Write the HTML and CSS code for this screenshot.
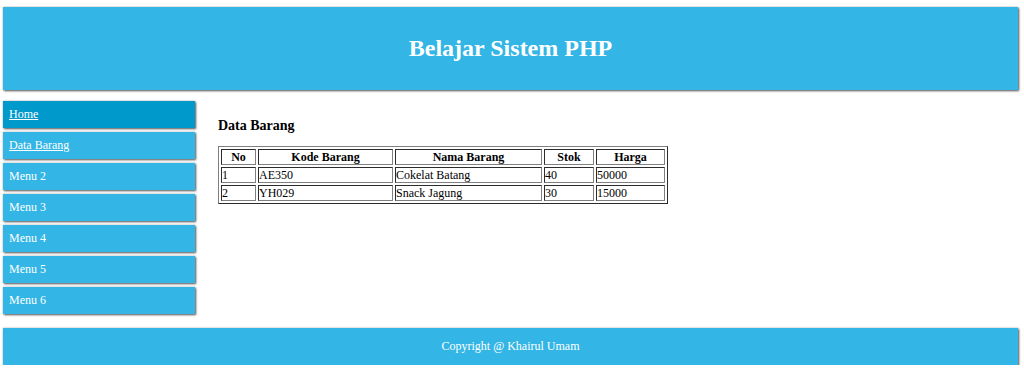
FILE: index.html
```html
<!doctype html>
<html>
<head>
    <meta charset="utf-8">
    <title>Belajar Sistem PHP</title>
    <link rel="stylesheet" href="styles.css">
</head>
<body>
<div id="wrapper">
    <div id="header">
        <h1>Belajar Sistem PHP</h1>
    </div>
    <div id="main">
        <div id="sidebar">
            <a class="menu active" href="#">Home</a>
            <a class="menu" href="#">Data Barang</a>
            <div class="menu">Menu 2</div>
            <div class="menu">Menu 3</div>
            <div class="menu">Menu 4</div>
            <div class="menu">Menu 5</div>
            <div class="menu">Menu 6</div>
        </div>
        <div id="content">
            <h3>Data Barang</h3>
            <table class="data" border="1">
                <tr>
                    <th class="colNo">No</th>
                    <th class="colKode">Kode Barang</th>
                    <th class="colNama">Nama Barang</th>
                    <th class="colStok">Stok</th>
                    <th class="colHarga">Harga</th>
                </tr>
                <tr>
                    <td>1</td>
                    <td>AE350</td>
                    <td>Cokelat Batang</td>
                    <td>40</td>
                    <td>50000</td>
                </tr>
                <tr>
                    <td>2</td>
                    <td>YH029</td>
                    <td>Snack Jagung</td>
                    <td>30</td>
                    <td>15000</td>
                </tr>
            </table>
        </div>
    </div>
    <div id="footer">
        Copyright @ Khairul Umam
    </div>
</div>
</body>
</html>
```

FILE: styles.css
```css
html {
    background-color: #fff;
}

body {
    margin: 0;
    font-family: "Liberation Serif", "Times New Roman", serif;
    font-size: 12px;
    color: #000;
}

#wrapper {
    margin: 7px 6px 0 3px;
}

#header {
    height: 83px;
    background-color: #33b5e5;
    box-shadow: 1px 1px 2px #555, 0 0 2px #ccc;
    display: flex;
    align-items: center;
    justify-content: center;
}

#header h1 {
    margin: 0;
    color: #fff;
    font-size: 24px;
}

#main {
    display: flex;
    margin-top: 11px;
}

#sidebar {
    width: 192px;
    display: flex;
    flex-direction: column;
    gap: 4px;
}

.menu {
    display: block;
    height: 27px;
    line-height: 27px;
    padding-left: 6px;
    color: #fff;
    background-color: #33b5e5;
    box-shadow: 1px 1px 2px #555, 0 0 2px #ccc;
}

a.menu {
    text-decoration: underline;
}

.menu.active {
    background-color: #0099cc;
}

#content {
    margin-left: 23px;
}

#content h3 {
    font-size: 14px;
    margin: 17px 0 12px;
}

table.data {
    border-collapse: separate;
    border-spacing: 2px;
}

table.data th, table.data td {
    padding: 0;
    height: 14px;
    line-height: 14px;
}

.colNo { width: 33px; }
.colKode { width: 133px; }
.colNama { width: 145px; }
.colStok { width: 48px; }
.colHarga { width: 67px; }

#footer {
    margin-top: 14px;
    height: 37px;
    line-height: 37px;
    text-align: center;
    color: #fff;
    background-color: #33b5e5;
    box-shadow: 1px 1px 2px #555, 0 0 2px #ccc;
}
```
